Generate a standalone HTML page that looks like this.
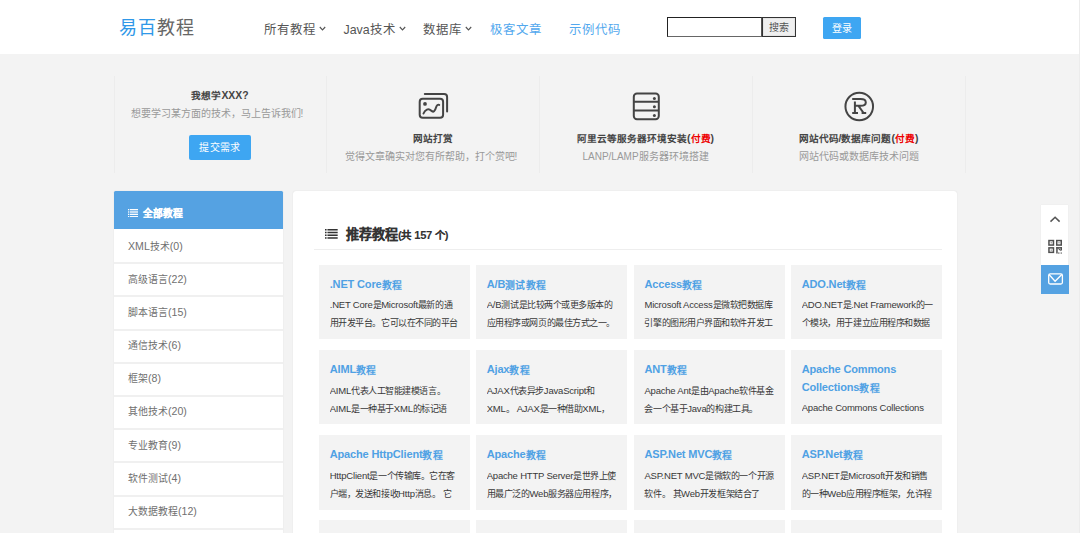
<!DOCTYPE html>
<html lang="zh-CN"><head><meta charset="utf-8">
<style>
*{box-sizing:border-box;margin:0;padding:0}
html,body{width:1080px;height:533px;overflow:hidden}
body{background:#f3f3f3;font-family:"Liberation Sans",sans-serif;position:relative;color:#333}
.abs{position:absolute;white-space:nowrap}
#hdr{position:absolute;left:0;top:0;width:1080px;height:54px;background:#fff}
.logo{left:119px;top:14px;font-size:18px;line-height:28px;color:#666;letter-spacing:1px}
.logo b{font-weight:normal;color:#2f98e8}
.nav{top:19.5px;font-size:12.4px;letter-spacing:0.9px;line-height:20px;color:#555}
.lat{font-size:12.4px;letter-spacing:0}
.nav.blue{color:#52a8ee}
.chev{display:inline-block;width:7px;height:5px;margin-left:3px;vertical-align:middle;position:relative;top:-1.8px}
#sinput{left:667px;top:17px;width:95px;height:20px;border:1px solid #444;border-color:#222 #555 #666 #222;background:#fff}
#sbtn{left:762px;top:17px;width:34px;height:20px;border:1px solid #333;background:#efefef;box-shadow:inset 0 0 0 1px #e4e4e4;font-size:10px;line-height:19.5px;text-align:center;color:#555}
#login{left:823px;top:17px;width:38px;height:21.7px;background:#3ea6f2;border-radius:1.5px;color:#fff;font-size:10px;letter-spacing:0.3px;line-height:23.5px;text-align:center}
.vline{position:absolute;top:76px;height:97px;width:1px;background:#ececec}
.ft i{font-style:normal;font-size:9.6px}
.ft{font-size:10.4px;font-weight:bold;color:#444;text-align:center;line-height:14px}
.fs{font-size:10px;color:#999;text-align:center;line-height:14px}
.red{color:#e00}
#fbtn{left:189px;top:135px;width:62px;height:25px;background:#3ea6f2;border-radius:2px;color:#fff;font-size:10px;letter-spacing:0.3px;line-height:26.5px;text-align:center}
#side{position:absolute;left:114px;top:191px;width:169px;height:400px;box-shadow:0 0 1.2px rgba(0,0,0,0.13);border-radius:1.5px 1.5px 0 0}
#side .head{-webkit-text-stroke:0.25px #fff;height:38px;background:#55a2e2;border-radius:1.5px 1.5px 0 0;color:#fff;font-weight:bold;font-size:9.7px;line-height:38px;padding-left:13.6px;padding-top:4px}
#side .it i{font-style:normal;font-size:9.9px}
#side .it{background:#fff;height:33.2px;border-top:2px solid #f0f0f0;font-size:10.6px;color:#707070;line-height:28px;padding-left:14px;padding-top:0.5px}
#side .it:nth-child(2){border-top-color:#fff}
#main{position:absolute;left:293px;top:191px;width:664px;height:400px;background:#fff;border-radius:3px;box-shadow:0 0 1.2px rgba(0,0,0,0.13)}
#mtitle{left:346px;top:226px;font-size:13.1px;font-weight:bold;color:#333;line-height:18px;-webkit-text-stroke:0.08px #333}
#mtitle small{font-size:11.2px;letter-spacing:-0.3px}
#mtitle i{font-style:normal;font-size:10.4px;letter-spacing:0}
#msep{position:absolute;left:314px;top:249px;width:628px;height:1px;background:#eee}
.card{position:absolute;width:151px;height:74.3px;background:#f3f3f3;overflow:hidden;padding:11.2px 0 0 10.7px}
.card h4{font-size:11px;line-height:17.6px;color:#4fa1e4;font-weight:bold;margin-bottom:2.8px;white-space:nowrap;letter-spacing:-0.15px}
.card i{font-style:normal}
.card h4 i{font-size:9.8px;letter-spacing:0.2px;position:relative;top:0.8px}
.card p{font-size:9.5px;letter-spacing:-0.2px;line-height:18px;color:#383838;white-space:nowrap;height:36px;overflow:hidden}
.card p i{font-size:9px;letter-spacing:-0.45px}
#tool{position:absolute;left:1040.7px;top:204.6px;width:27.6px;height:60.4px;background:#fff;box-shadow:0 0 1px rgba(0,0,0,0.08)}
#mail{position:absolute;left:1040.9px;top:265px;width:28.1px;height:28.8px;background:#55a2e2}
</style></head>
<body>
<div id="hdr"></div>
<div style="position:absolute;left:1079px;top:0;width:1px;height:533px;background:#ececec"></div>
<div class="abs logo"><b>易百</b>教程</div>
<div class="abs nav" style="left:264px">所有教程<svg class="chev" viewBox="0 0 7 5"><polyline points="0.8,1 3.5,3.8 6.2,1" fill="none" stroke="#555" stroke-width="1.15"/></svg></div>
<div class="abs nav" style="left:343.5px"><span class="lat">Java</span>技术<svg class="chev" viewBox="0 0 7 5"><polyline points="0.8,1 3.5,3.8 6.2,1" fill="none" stroke="#555" stroke-width="1.15"/></svg></div>
<div class="abs nav" style="left:423px">数据库<svg class="chev" viewBox="0 0 7 5"><polyline points="0.8,1 3.5,3.8 6.2,1" fill="none" stroke="#555" stroke-width="1.15"/></svg></div>
<div class="abs nav blue" style="left:490px">极客文章</div>
<div class="abs nav blue" style="left:569px">示例代码</div>
<div class="abs" id="sinput"></div>
<div class="abs" id="sbtn">搜索</div>
<div class="abs" id="login">登录</div>

<div class="vline" style="left:114px"></div>
<div class="vline" style="left:326px"></div>
<div class="vline" style="left:539px"></div>
<div class="vline" style="left:752px"></div>
<div class="vline" style="left:965px"></div>

<div class="abs ft" style="left:114px;width:212px;top:89px"><i>我想学</i>XXX?</div>
<div class="abs fs" style="left:111px;width:212px;top:107px">想要学习某方面的技术，马上告诉我们!</div>
<div class="abs" id="fbtn">提交需求</div>

<div class="abs ft" style="left:326px;width:213px;top:132px"><i>网站打赏</i></div>
<div class="abs fs" style="left:324.5px;width:213px;top:150px">觉得文章确实对您有所帮助，打个赏吧!</div>
<div class="abs ft" style="left:539px;width:213px;top:132px"><i>阿里云等服务器环境安装</i>(<span class="red"><i>付费</i></span>)</div>
<div class="abs fs" style="left:539px;width:213px;top:150px">LANP/LAMP服务器环境搭建</div>
<div class="abs ft" style="left:752px;width:213px;top:132px"><i>网站代码</i>/<i>数据库问题</i>(<span class="red"><i>付费</i></span>)</div>
<div class="abs fs" style="left:752px;width:213px;top:150px">网站代码或数据库技术问题</div>


<svg class="abs" style="left:413px;top:88px" width="40" height="36" viewBox="0 0 40 36" fill="none" stroke="#444" stroke-width="2" stroke-linecap="round">
<rect x="6.7" y="10.8" width="23.4" height="18.9" rx="3"/>
<path d="M11.8 6H31.1Q34.1 6 34.1 9V23.5"/>
<circle cx="12" cy="15.9" r="1.9" fill="#444" stroke="none"/>
<path d="M10.5 25.5C12 21.5 15.5 20 18 22.5C20.5 25 22 23 23 19.5C23.8 16.8 25 16.4 26.2 16.9" stroke-width="2"/>
</svg>
<svg class="abs" style="left:626px;top:88px" width="40" height="36" viewBox="0 0 40 36" fill="none" stroke="#444" stroke-width="2">
<rect x="7.8" y="5.6" width="25" height="25.7" rx="3.2"/>
<path d="M7.8 13.85H32.8M7.8 22.6H32.8"/>
<circle cx="28.4" cy="10.5" r="1.5" fill="#444" stroke="none"/>
<circle cx="28.4" cy="18.8" r="1.5" fill="#444" stroke="none"/>
<circle cx="28.4" cy="27.4" r="1.5" fill="#444" stroke="none"/>
</svg>
<svg class="abs" style="left:839px;top:88px" width="40" height="36" viewBox="0 0 40 36" fill="none" stroke="#444" stroke-width="2">
<circle cx="20.25" cy="18.5" r="13.8"/>
<path d="M13.2 11.1H21.5C25 11.1 26.8 12.6 26.8 14.4C26.8 16.3 25 17.7 21.5 17.7H15.9M15.9 13.6V25M13.2 25H19M19.3 17.7L24.6 25M22.6 25H27.2"/>
</svg>
<div id="side">
<div class="head"><svg width="10.4" height="8.4" viewBox="0 0 10.4 8.4" style="vertical-align:baseline;margin-right:5px" fill="#fff"><rect x="0" y="0" width="1.3" height="1.3"/><rect x="0" y="2.35" width="1.3" height="1.3"/><rect x="0" y="4.7" width="1.3" height="1.3"/><rect x="0" y="7.05" width="1.3" height="1.3"/><rect x="2" y="0" width="8.4" height="1.3"/><rect x="2" y="2.35" width="8.4" height="1.3"/><rect x="2" y="4.7" width="8.4" height="1.3"/><rect x="2" y="7.05" width="8.4" height="1.3"/></svg>全部教程</div>
<div class="it">XML<i>技术</i>(0)</div>
<div class="it"><i>高级语言</i>(22)</div>
<div class="it"><i>脚本语言</i>(15)</div>
<div class="it"><i>通信技术</i>(6)</div>
<div class="it"><i>框架</i>(8)</div>
<div class="it"><i>其他技术</i>(20)</div>
<div class="it"><i>专业教育</i>(9)</div>
<div class="it"><i>软件测试</i>(4)</div>
<div class="it"><i>大数据教程</i>(12)</div>
<div class="it"></div>
</div>

<div id="main"></div>
<svg class="abs" style="left:325.2px;top:229.1px" width="12.7" height="9.8" viewBox="0 0 10.4 8.4" preserveAspectRatio="none" fill="#333"><rect x="0" y="0" width="1.3" height="1.3"/><rect x="0" y="2.35" width="1.3" height="1.3"/><rect x="0" y="4.7" width="1.3" height="1.3"/><rect x="0" y="7.05" width="1.3" height="1.3"/><rect x="2" y="0" width="8.4" height="1.3"/><rect x="2" y="2.35" width="8.4" height="1.3"/><rect x="2" y="4.7" width="8.4" height="1.3"/><rect x="2" y="7.05" width="8.4" height="1.3"/></svg>
<div class="abs" id="mtitle">推荐教程<small>(<i>共</i> 157 <i>个</i>)</small></div>
<div id="msep"></div>

<!--CARDS-->
<div class="card" style="left:319px;top:264.8px"><h4>.NET Core<i>教程</i></h4><p>.NET Core<i>是</i>Microsoft<i>最新的通</i><br><i>用开发平台。它可以在不同的平台</i></p></div>
<div class="card" style="left:476px;top:264.8px"><h4>A/B<i>测试教程</i></h4><p>A/B<i>测试是比较两个或更多版本的</i><br><i>应用程序或网页的最佳方式之一。</i></p></div>
<div class="card" style="left:633.75px;top:264.8px"><h4>Access<i>教程</i></h4><p>Microsoft Access<i>是微软把数据库</i><br><i>引擎的图形用户界面和软件开发工</i></p></div>
<div class="card" style="left:791px;top:264.8px"><h4>ADO.Net<i>教程</i></h4><p>ADO.NET<i>是</i>.Net Framework<i>的一</i><br><i>个模块，用于建立应用程序和数据</i></p></div>
<div class="card" style="left:319px;top:350px"><h4>AIML<i>教程</i></h4><p>AIML<i>代表人工智能建模语言。</i><br>AIML<i>是一种基于</i>XML<i>的标记语</i></p></div>
<div class="card" style="left:476px;top:350px"><h4>Ajax<i>教程</i></h4><p>AJAX<i>代表异步</i>JavaScript<i>和</i><br>XML<i>。</i> AJAX<i>是一种借助</i>XML<i>，</i></p></div>
<div class="card" style="left:633.75px;top:350px"><h4>ANT<i>教程</i></h4><p>Apache Ant<i>是由</i>Apache<i>软件基金</i><br><i>会一个基于</i>Java<i>的构建工具。</i></p></div>
<div class="card" style="left:791px;top:350px"><h4>Apache Commons<br>Collections<i>教程</i></h4><p>Apache Commons Collections</p></div>
<div class="card" style="left:319px;top:435.3px"><h4>Apache HttpClient<i>教程</i></h4><p>HttpClient<i>是一个传输库。它在客</i><br><i>户端，发送和接收</i>Http<i>消息。</i> <i>它</i></p></div>
<div class="card" style="left:476px;top:435.3px"><h4>Apache<i>教程</i></h4><p>Apache HTTP Server<i>是世界上使</i><br><i>用最广泛的</i>Web<i>服务器应用程序，</i></p></div>
<div class="card" style="left:633.75px;top:435.3px"><h4>ASP.Net MVC<i>教程</i></h4><p>ASP.NET MVC<i>是微软的一个开源</i><br><i>软件。</i> <i>其</i>Web<i>开发框架结合了</i></p></div>
<div class="card" style="left:791px;top:435.3px"><h4>ASP.Net<i>教程</i></h4><p>ASP.NET<i>是</i>Microsoft<i>开发和销售</i><br><i>的一种</i>Web<i>应用程序框架，允许程</i></p></div>
<div class="card" style="left:319px;top:520.3px"></div>
<div class="card" style="left:476px;top:520.3px"></div>
<div class="card" style="left:633.75px;top:520.3px"></div>
<div class="card" style="left:791px;top:520.3px"></div>
<!--/CARDS-->

<div id="tool"></div>
<div id="mail"></div>
<svg class="abs" style="left:1036px;top:200px" width="36" height="96" viewBox="0 0 36 96" fill="none">
<polyline points="14.5,21.6 19.1,17.2 23.6,21.6" stroke="#555" stroke-width="1.5"/>
<g fill="#505050">
<rect x="12.2" y="39.8" width="6" height="6"/><rect x="20" y="39.8" width="6" height="6"/><rect x="12.2" y="47.1" width="6" height="6"/>
<rect x="20.2" y="47.1" width="1.5" height="6.4"/><rect x="20.2" y="47.1" width="5.8" height="1.4"/><rect x="24.6" y="47.1" width="1.4" height="3.4"/>
<path d="M21.5 48.2L24.6 51.2V49.6L22.6 48.2Z"/>
<rect x="22" y="52.5" width="0.9" height="1.1"/><rect x="23.5" y="52.5" width="0.9" height="1.1"/><rect x="25" y="52.5" width="0.9" height="1.1"/>
</g>
<g fill="#fff"><rect x="13.7" y="41.3" width="3" height="3"/><rect x="21.5" y="41.3" width="3" height="3"/><rect x="13.7" y="48.6" width="3" height="3"/></g>
<g fill="#505050"><rect x="14.7" y="42.3" width="1" height="1"/><rect x="22.5" y="42.3" width="1" height="1"/><rect x="14.7" y="49.6" width="1" height="1"/></g>
<rect x="12.7" y="73.9" width="13.7" height="10.1" rx="1.5" stroke="#fff" stroke-width="1.3"/>
<polyline points="13,74.5 19.1,81.3 25.8,74.5" stroke="#fff" stroke-width="1.3"/>
</svg>
</body></html>
